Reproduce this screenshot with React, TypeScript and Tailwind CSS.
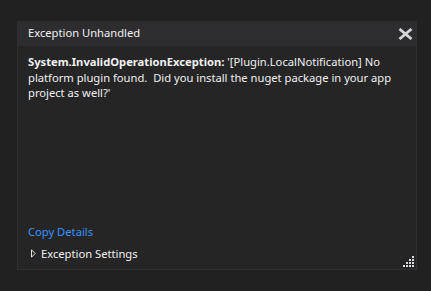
import React from "react";

const Grip = () => {
  // staircase of little dots in the corner
  const dots: [number, number][] = [
    [9, 0],
    [6, 3],
    [9, 3],
    [3, 6],
    [6, 6],
    [9, 6],
    [0, 9],
    [3, 9],
    [6, 9],
    [9, 9],
  ];
  return (
    <svg width="11" height="11" viewBox="0 0 11 11">
      {dots.map(([x, y], i) => (
        <rect key={i} x={x} y={y} width="2" height="2" fill="#d8dbe3" />
      ))}
    </svg>
  );
};

export default function App() {
  return (
    <div
      className="w-[431px] h-[291px] bg-[#212121] pt-[21px] pl-[17px]"
      style={{ fontFamily: '"Segoe UI", "Noto Sans", sans-serif' }}
    >
      <div className="relative w-[400px] h-[249px] bg-[#252526] border border-[#303033] border-t-0 flex flex-col">
        <div className="h-[25px] bg-[#2d2d30] flex items-center justify-between pl-[10px] pr-[3px]">
          <span className="text-[11.2px] text-[#f1f1f1]">Exception Unhandled</span>
          <svg width="15" height="12" viewBox="0 0 15 12" className="mt-[1px]">
            <path d="M1.5 1 L13.5 11 M13.5 1 L1.5 11" stroke="#d4d4d4" strokeWidth="2.8" />
          </svg>
        </div>
        <div className="flex-1 flex flex-col pl-[10px] pr-[6px] pt-[8px] pb-[8px] text-[11.2px] leading-[15.5px] text-[#f1f1f1]">
          <p className="whitespace-pre-wrap">
            <span className="font-bold">System.InvalidOperationException:</span> '[Plugin.LocalNotification] No
            <br />
            platform plugin found.{"  "}Did you install the nuget package in your app
            <br />
            project as well?'
          </p>
          <div className="flex-1" />
          <span className="text-[#3794ff] mb-[6px]">Copy Details</span>
          <div className="flex items-center gap-[5px] pl-[3px]">
            <svg width="5" height="9" viewBox="0 0 5 9">
              <path d="M0.5 0.8 L4.2 4.5 L0.5 8.2 Z" fill="none" stroke="#e8e8e8" strokeWidth="1" />
            </svg>
            <span className="text-[#f1f1f1]">Exception Settings</span>
          </div>
        </div>
        <div className="absolute right-[2px] bottom-[2px]">
          <Grip />
        </div>
      </div>
    </div>
  );
}
